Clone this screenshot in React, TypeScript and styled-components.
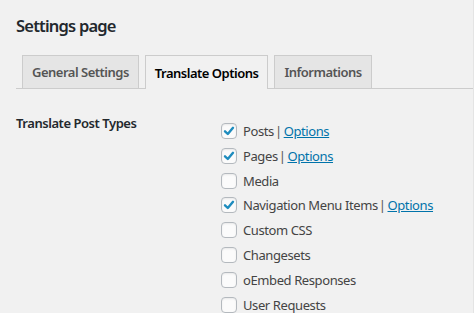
import React from "react";
import styled, { createGlobalStyle } from "styled-components";

const GlobalStyle = createGlobalStyle`
  html, body {
    margin: 0;
    padding: 0;
    background: #f1f1f1;
  }
  body {
    font-family: "Noto Sans", "Open Sans", sans-serif;
    color: #444;
  }
`;

const Page = styled.div`
  width: 474px;
  height: 313px;
  box-sizing: border-box;
  padding: 14px 0 0 16px;
  overflow: hidden;
  border-right: 1px solid #e4e4e4;
`;

const Title = styled.h1`
  margin: 0;
  font-size: 16.5px;
  font-weight: 600;
  line-height: 24px;
  letter-spacing: -0.8px;
  color: #23282d;
`;

const TabBar = styled.nav`
  display: flex;
  align-items: flex-end;
  gap: 6px;
  margin-top: 17px;
  padding-left: 6px;
  border-bottom: 1px solid #ccc;
  height: 33px;
`;

const Tab = styled.a<{ $active?: boolean }>`
  display: flex;
  align-items: center;
  box-sizing: border-box;
  height: ${(p) => (p.$active ? "34px" : "33px")};
  margin-bottom: ${(p) => (p.$active ? "-1px" : "0")};
  padding: 0 9px;
  border: 1px solid #ccc;
  border-bottom: none;
  background: ${(p) => (p.$active ? "#f1f1f1" : "#e5e5e5")};
  color: ${(p) => (p.$active ? "#000" : "#555")};
  font-size: 13px;
  font-weight: 600;
  letter-spacing: -0.5px;
  text-decoration: none;
  white-space: nowrap;
`;

const FormRow = styled.div`
  display: grid;
  grid-template-columns: 205px 1fr;
  margin-top: 26px;
`;

const RowLabel = styled.div`
  font-size: 13px;
  font-weight: 600;
  letter-spacing: -0.45px;
  color: #23282d;
  line-height: 16px;
`;

const OptionList = styled.ul`
  list-style: none;
  margin: 0;
  padding: 8px 0 0 0;
  display: flex;
  flex-direction: column;
  gap: 8.8px;
`;

const OptionItem = styled.li`
  display: flex;
  align-items: center;
  gap: 6px;
  height: 16px;
  font-size: 13px;
  letter-spacing: -0.4px;
  color: #444;
  white-space: nowrap;
`;

const Box = styled.span`
  box-sizing: border-box;
  width: 16px;
  height: 16px;
  border: 1px solid #b4b9be;
  border-radius: 4px;
  background: #fbfbfb;
  box-shadow: inset 0 1px 2px rgba(0, 0, 0, 0.08);
  display: flex;
  align-items: center;
  justify-content: center;
  flex-shrink: 0;
`;

const Sep = styled.span`
  margin: 0 2px 0 1px;
  color: #555;
`;

const OptionsLink = styled.a`
  color: #0073aa;
  text-decoration: underline;
`;

const Check = () => (
  <svg width="12" height="12" viewBox="0 0 12 12">
    <path
      d="M2 6.3 L4.8 9 L10 2.8"
      fill="none"
      stroke="#1e8cbe"
      strokeWidth="2.4"
      strokeLinecap="round"
      strokeLinejoin="round"
    />
  </svg>
);

const types = [
  { label: "Posts", checked: true, options: true },
  { label: "Pages", checked: true, options: true },
  { label: "Media", checked: false, options: false },
  { label: "Navigation Menu Items", checked: true, options: true },
  { label: "Custom CSS", checked: false, options: false },
  { label: "Changesets", checked: false, options: false },
  { label: "oEmbed Responses", checked: false, options: false },
  { label: "User Requests", checked: false, options: false },
];

export default function App() {
  return (
    <>
      <GlobalStyle />
      <Page>
        <Title>Settings page</Title>
        <TabBar>
          <Tab>General Settings</Tab>
          <Tab $active>Translate Options</Tab>
          <Tab>Informations</Tab>
        </TabBar>
        <FormRow>
          <RowLabel>Translate Post Types</RowLabel>
          <OptionList>
            {types.map((t) => (
              <OptionItem key={t.label}>
                <Box>{t.checked && <Check />}</Box>
                <span>
                  {t.label}
                  {t.options && (
                    <>
                      <Sep>|</Sep>
                      <OptionsLink href="#">Options</OptionsLink>
                    </>
                  )}
                </span>
              </OptionItem>
            ))}
          </OptionList>
        </FormRow>
      </Page>
    </>
  );
}
